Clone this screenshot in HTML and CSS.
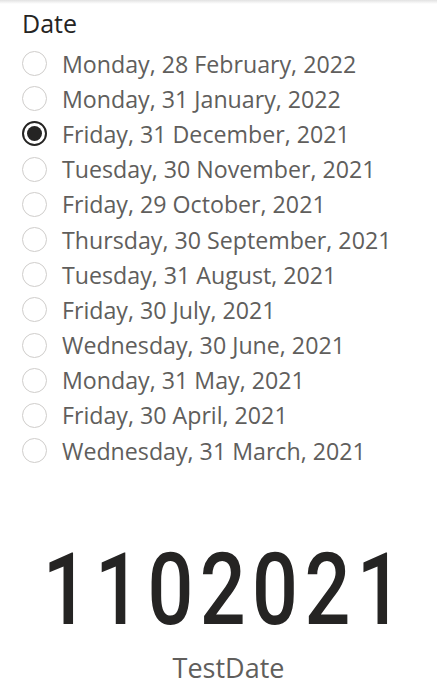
FILE: index.html
```html
<!DOCTYPE html>
<html>
<head>
<meta charset="utf-8">
<link rel="stylesheet" href="styles.css">
</head>
<body>
<div class="topbar"></div>
<section class="slicer">
  <div class="slicer-title">Date</div>
  <ul class="options">
    <li class="option"><span class="radio"></span><span class="label">Monday, 28 February, 2022</span></li>
    <li class="option"><span class="radio"></span><span class="label">Monday, 31 January, 2022</span></li>
    <li class="option"><span class="radio selected"></span><span class="label">Friday, 31 December, 2021</span></li>
    <li class="option"><span class="radio"></span><span class="label">Tuesday, 30 November, 2021</span></li>
    <li class="option"><span class="radio"></span><span class="label">Friday, 29 October, 2021</span></li>
    <li class="option"><span class="radio"></span><span class="label">Thursday, 30 September, 2021</span></li>
    <li class="option"><span class="radio"></span><span class="label">Tuesday, 31 August, 2021</span></li>
    <li class="option"><span class="radio"></span><span class="label">Friday, 30 July, 2021</span></li>
    <li class="option"><span class="radio"></span><span class="label">Wednesday, 30 June, 2021</span></li>
    <li class="option"><span class="radio"></span><span class="label">Monday, 31 May, 2021</span></li>
    <li class="option"><span class="radio"></span><span class="label">Friday, 30 April, 2021</span></li>
    <li class="option"><span class="radio"></span><span class="label">Wednesday, 31 March, 2021</span></li>
  </ul>
</section>
<section class="card">
  <div class="card-value">1102021</div>
  <div class="card-label">TestDate</div>
</section>
</body>
</html>
```
FILE: styles.css
```css
html, body {
  margin: 0;
  padding: 0;
  background: #ffffff;
}
body {
  width: 437px;
  height: 695px;
  overflow: hidden;
  font-family: "Segoe UI", "Open Sans", "Noto Sans", sans-serif;
}
.topbar {
  height: 4px;
  background: linear-gradient(#e2e2e2, #f4f4f4 60%, #ffffff);
}
.slicer {
  padding: 4px 0 0 22px;
}
.slicer-title {
  font-size: 25px;
  line-height: 30px;
  color: #252423;
}
.options {
  list-style: none;
  margin: 8px 0 0 0;
  padding: 0;
}
.option {
  display: flex;
  align-items: center;
  height: 35.2px;
  gap: 15px;
}
.radio {
  box-sizing: border-box;
  width: 25px;
  height: 25px;
  border-radius: 50%;
  border: 1.5px solid #cfcdcb;
  flex: none;
  display: flex;
  align-items: center;
  justify-content: center;
}
.radio.selected {
  border: 2px solid #252423;
}
.radio.selected::after {
  content: "";
  width: 15px;
  height: 15px;
  border-radius: 50%;
  background: #252423;
}
.label {
  font-size: 23.2px;
  color: #605e5c;
  white-space: nowrap;
}
.card {
  display: flex;
  flex-direction: column;
  align-items: center;
  padding: 72px 0 0 6px;
}
.card-value {
  font-family: Roboto, "DejaVu Sans", sans-serif;
  font-weight: 500;
  font-size: 101px;
  line-height: 100px;
  letter-spacing: 8px;
  margin-right: -8px;
  color: #252423;
  transform: scaleX(0.8);
}
.card-label {
  margin-top: 11px;
  padding-left: 14px;
  font-size: 27px;
  line-height: 34px;
  color: #605e5c;
}
```
